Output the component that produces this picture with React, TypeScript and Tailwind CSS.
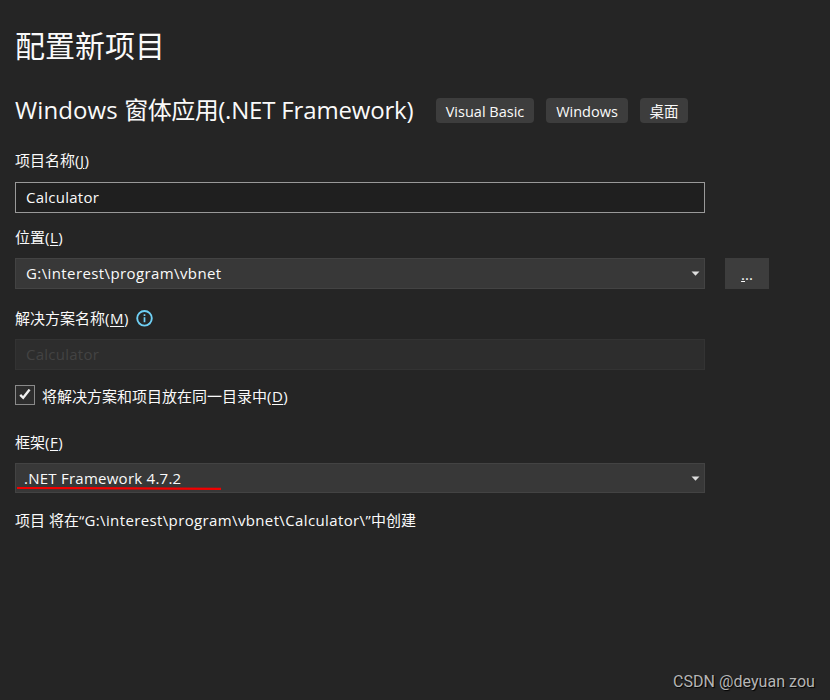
import type { ReactNode } from 'react';

interface FieldLabelProps {
    text: string;
    accessKey: string;
    className?: string;
    children?: ReactNode;
}

function FieldLabel({ text, accessKey, className = '', children }: FieldLabelProps) {
    return (
        <div className={`flex h-5 items-center leading-5 ${className}`}>
            <label className="whitespace-nowrap">
                {text}
                <span className="tracking-[0.5px]">
                    (<span className="underline underline-offset-2">{accessKey}</span>)
                </span>
            </label>
            {children}
        </div>
    );
}

function SelectBox({ value, className = '' }: { value: string; className?: string }) {
    return (
        <div className={`flex w-[690px] items-center justify-between border border-[#434343] bg-[#383838] pr-1 ${className}`}>
            <span className="whitespace-pre">{value}</span>
            <svg className="h-[5px] w-[9px]" viewBox="0 0 9 5">
                <path d="M0.5 0.5h8L4.5 4.7z" fill="#dedede" />
            </svg>
        </div>
    );
}

function Tag({ children, className = '' }: { children: ReactNode; className?: string }) {
    return (
        <span className={`flex h-[25px] items-center justify-center rounded bg-[#3d3d3d] pt-0.5 text-[14.5px] ${className}`}>
            {children}
        </span>
    );
}

function InfoIcon() {
    return (
        <svg className="ml-[7px] size-[17px]" viewBox="0 0 17 17" fill="none">
            <circle cx="8.5" cy="8.3" r="7.3" stroke="#6fd0f5" strokeWidth="1.9" />
            <path d="M8.5 7.3v5M8.5 4.2v1.7" stroke="#6fd0f5" strokeWidth="1.7" />
        </svg>
    );
}

export default function App() {
    return (
        <main className="flex h-[700px] w-[830px] flex-col overflow-hidden bg-[#252525] pl-[15px] font-['Open_Sans','Noto_Sans_CJK_SC',sans-serif] text-[15px] text-[#fafafa]">
            <h1 className="mt-[26px] h-10 text-[30px] leading-10">配置新项目</h1>

            <div className="mt-8 flex h-[25px] items-center">
                <h2 className="mb-0.5 w-[421px] whitespace-nowrap text-[24px] leading-8">
                    <span className="tracking-[0.1px]">Windows </span>
                    <span className="tracking-[-0.5px]">窗体应用</span>
                    <span className="tracking-[-0.17px]">(.NET Framework)</span>
                </h2>
                <Tag className="w-[98px]">Visual Basic</Tag>
                <Tag className="ml-3 w-[82px]">Windows</Tag>
                <Tag className="ml-3 w-12">桌面</Tag>
            </div>

            <FieldLabel text="项目名称" accessKey="J" className="mt-[27px]" />
            <div className="mt-3 flex h-[31px] w-[690px] items-center border border-[#999] bg-[#1f1f1f] pl-2.5 tracking-[0.25px]">
                Calculator
            </div>

            <FieldLabel text="位置" accessKey="L" className="mt-3.5" />
            <div className="mt-[11px] flex gap-5">
                <SelectBox value="G:\interest\program\vbnet" className="h-[31px] pl-2.5 tracking-[0.4px]" />
                <button type="button" className="h-[31px] w-11 bg-[#3d3d3d] pt-px">
                    <span className="underline">.</span>..
                </button>
            </div>

            <FieldLabel text="解决方案名称" accessKey="M" className="mt-[19px]">
                <InfoIcon />
            </FieldLabel>
            <div className="mt-[11px] flex h-[31px] w-[690px] items-center border border-[#333] bg-[#2d2d2d] pl-2.5 tracking-[0.25px] text-[#434343]">
                Calculator
            </div>

            <div className="mt-[15px] flex h-5 items-center">
                <span className="flex size-5 items-center justify-center border border-[#8a8a8a] bg-[#2d2d2d]">
                    <svg className="size-3" viewBox="0 0 12 12" fill="none">
                        <path d="M1.2 5.8L4.2 8.8L10.6 0.6" stroke="#f0f0f0" strokeWidth="2.4" />
                    </svg>
                </span>
                <FieldLabel text="将解决方案和项目放在同一目录中" accessKey="D" className="ml-[7px] mt-px" />
            </div>

            <FieldLabel text="框架" accessKey="F" className="mt-[27px]" />
            <div className="relative mt-[11px]">
                <SelectBox value=".NET Framework 4.7.2" className="h-[30px] pl-2 tracking-[0.25px]" />
                <svg className="absolute left-0.5 top-6 h-1 w-[205px]" viewBox="0 0 205 4">
                    <path d="M0 0.9L119 1.3L204 1.8" stroke="#f20000" strokeWidth="2.2" fill="none" />
                </svg>
            </div>

            <p className="mt-[17px] h-5 whitespace-nowrap leading-5">
                项目 将在<span className="tracking-[0.37px]">“G:\interest\program\vbnet\Calculator\”</span>中创建
            </p>

            <footer className="mb-2 mr-[15px] mt-auto h-5 self-end font-[Roboto,sans-serif] text-base leading-5 tracking-[0.05px] text-[#b5b5b5] [text-shadow:1px_1px_1px_#000]">
                CSDN @deyuan zou
            </footer>
        </main>
    );
}
